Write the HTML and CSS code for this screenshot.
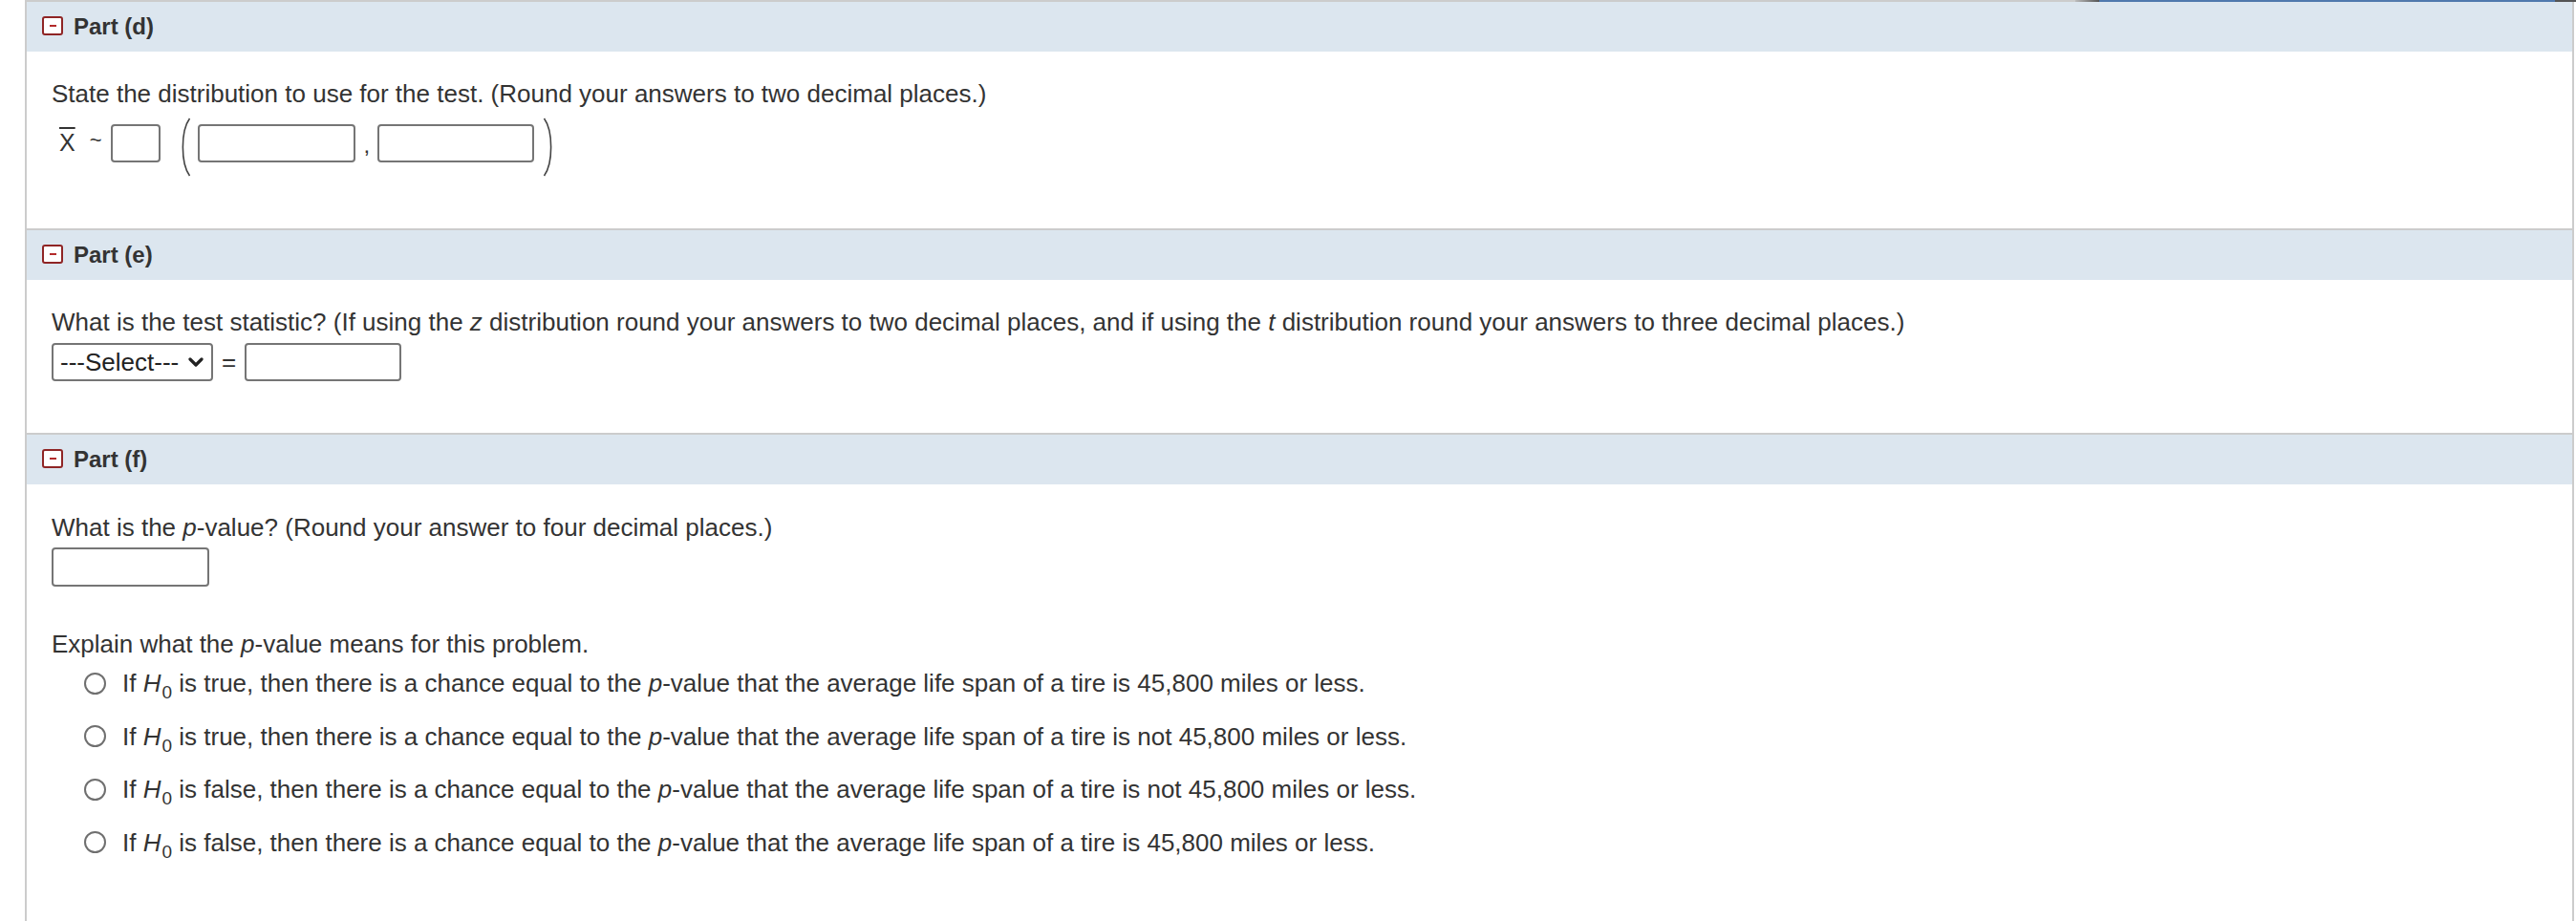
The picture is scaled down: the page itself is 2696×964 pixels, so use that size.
FILE: index.html
```html
<!DOCTYPE html>
<html lang="en">
<head>
<meta charset="utf-8">
<title>Parts d-f</title>
<link rel="stylesheet" href="styles.css">
</head>
<body>
<div class="topbar"><span class="tb-dark1"></span><span class="tb-blue"></span><span class="tb-dark2"></span></div>
<div class="panel">
  <section class="part">
    <div class="part-head"><span class="toggle"></span><span class="part-title">Part (d)</span></div>
    <div class="part-body">
      <p class="q">State the distribution to use for the test. (Round your answers to two decimal places.)</p>
      <div class="dist-row">
        <span class="xbar">X</span>
        <span class="tilde">~</span>
        <input class="box box-sm" type="text">
        <svg class="paren paren-l" width="14" height="62" viewBox="0 0 14 62"><path d="M12.5 1 C3 14 3 48 12.5 61" fill="none" stroke="#444" stroke-width="1.6"/></svg>
        <input class="box box-md" type="text">
        <span class="comma">,</span>
        <input class="box box-md2" type="text">
        <svg class="paren paren-r" width="14" height="62" viewBox="0 0 14 62"><path d="M1.5 1 C11 14 11 48 1.5 61" fill="none" stroke="#444" stroke-width="1.6"/></svg>
      </div>
    </div>
  </section>
  <section class="part">
    <div class="part-head"><span class="toggle"></span><span class="part-title">Part (e)</span></div>
    <div class="part-body">
      <p class="q">What is the test statistic? (If using the <i>z</i> distribution round your answers to two decimal places, and if using the <i>t</i> distribution round your answers to three decimal places.)</p>
      <div class="stat-row">
        <span class="select-wrap">
          <select class="select"><option>---Select---</option></select>
          <svg class="chev" width="16" height="10" viewBox="0 0 16 10"><path d="M2 2 L8 8 L14 2" fill="none" stroke="#222" stroke-width="3.2" stroke-linecap="round" stroke-linejoin="round"/></svg>
        </span>
        <span class="eq">=</span>
        <input class="box box-stat" type="text">
      </div>
    </div>
  </section>
  <section class="part">
    <div class="part-head"><span class="toggle"></span><span class="part-title">Part (f)</span></div>
    <div class="part-body body-f">
      <p class="q">What is the <i>p</i>-value? (Round your answer to four decimal places.)</p>
      <input class="box box-p" type="text">
      <p class="q explain">Explain what the <i>p</i>-value means for this problem.</p>
      <div class="options">
        <label class="opt"><span class="radio"></span><span class="opt-text">If <i>H</i><sub>0</sub> is true, then there is a chance equal to the <i>p</i>-value that the average life span of a tire is 45,800 miles or less.</span></label>
        <label class="opt"><span class="radio"></span><span class="opt-text">If <i>H</i><sub>0</sub> is true, then there is a chance equal to the <i>p</i>-value that the average life span of a tire is not 45,800 miles or less.</span></label>
        <label class="opt"><span class="radio"></span><span class="opt-text">If <i>H</i><sub>0</sub> is false, then there is a chance equal to the <i>p</i>-value that the average life span of a tire is not 45,800 miles or less.</span></label>
        <label class="opt"><span class="radio"></span><span class="opt-text">If <i>H</i><sub>0</sub> is false, then there is a chance equal to the <i>p</i>-value that the average life span of a tire is 45,800 miles or less.</span></label>
      </div>
    </div>
  </section>
</div>
</body>
</html>
```
FILE: styles.css
```css
html, body {
  margin: 0;
  padding: 0;
  background: #ffffff;
}
body {
  font-family: "Liberation Sans", Arial, sans-serif;
  font-size: 26px;
  color: #333333;
  overflow: hidden;
}
.topbar {
  position: absolute;
  top: 0;
  left: 2172px;
  height: 2px;
  display: flex;
}
.tb-dark1 { width: 25px; background: linear-gradient(90deg, #bbbbbb, #555555); }
.tb-blue { width: 477px; background: #5079ad; }
.tb-dark2 { width: 22px; background: #555555; }

.panel {
  margin-left: 26px;
  width: 2668px;
  box-sizing: border-box;
  border-left: 2px solid #cccccc;
  border-right: 2px solid #cccccc;
  min-height: 964px;
}
.part {
  border-top: 2px solid #cccccc;
}
.part-head {
  height: 52px;
  background: #dce6ef;
  display: flex;
  align-items: center;
  padding-left: 16px;
}
.toggle {
  width: 22px;
  height: 20px;
  box-sizing: border-box;
  border: 2px solid #8f2525;
  border-radius: 3px;
  background: #ffffff;
  display: flex;
  align-items: center;
  justify-content: center;
  margin-top: -2px;
}
.toggle::before {
  content: "";
  width: 7px;
  height: 2px;
  background: #b32a2a;
}
.part-title {
  margin-left: 11px;
  font-weight: bold;
  font-size: 24px;
  line-height: 28px;
  color: #333333;
}
.part-body {
  padding: 30px 26px 54px;
}
.q {
  margin: 0;
  line-height: 28px;
}

/* Part d */
.dist-row {
  display: flex;
  align-items: flex-start;
  height: 62px;
  margin-top: 11px;
}
.xbar {
  margin-left: 8px;
  margin-top: 12px;
  line-height: 28px;
  font-size: 25px;
  text-decoration: overline;
  text-decoration-thickness: 2px;
}
.tilde {
  margin-left: 15px;
  margin-top: 10px;
  line-height: 28px;
  font-size: 22px;
}
.box {
  box-sizing: border-box;
  height: 40px;
  border: 2px solid #757575;
  border-radius: 4px;
  background: #ffffff;
  margin: 0;
  padding: 0 6px;
  font: inherit;
  outline: none;
}
.box-sm { width: 52px; margin-left: 9px; margin-top: 7px; }
.paren { display: block; flex: none; }
.paren-l { margin-left: 18px; }
.box-md { width: 165px; margin-left: 7px; margin-top: 7px; }
.comma { margin-left: 9px; margin-top: 15px; line-height: 28px; font-size: 24px; }
.box-md2 { width: 164px; margin-left: 8px; margin-top: 7px; }
.paren-r { margin-left: 9px; }

/* Part e */
.stat-row {
  display: flex;
  align-items: center;
  margin-top: 8px;
}
.select-wrap {
  position: relative;
  display: block;
}
.select {
  display: block;
  box-sizing: border-box;
  width: 169px;
  height: 40px;
  border: 2px solid #757575;
  border-radius: 4px;
  background: #ffffff;
  font-family: "Liberation Sans", Arial, sans-serif;
  font-size: 26px;
  color: #222222;
  padding: 0 0 0 7px;
  -webkit-appearance: none;
  appearance: none;
  outline: none;
}
.chev {
  position: absolute;
  right: 10px;
  top: 15px;
  pointer-events: none;
}
.eq {
  margin-left: 9px;
  line-height: 28px;
}
.box-stat { width: 164px; margin-left: 9px; }

/* Part f */
.body-f { padding-top: 31px; }
.box-p {
  display: block;
  width: 165px;
  height: 41px;
  margin-top: 7px;
}
.explain { margin-top: 46px; }
.options {
  display: flex;
  flex-direction: column;
  gap: 27.5px;
  margin-top: 13px;
}
.opt {
  display: flex;
  align-items: center;
  padding-left: 34px;
  line-height: 28px;
}
.radio {
  width: 23px;
  height: 23px;
  box-sizing: border-box;
  border: 2px solid #6f6f6f;
  border-radius: 50%;
  background: #ffffff;
  flex: none;
}
.opt-text {
  margin-left: 17px;
}
.opt-text sub {
  font-size: 19px;
  line-height: 0;
  vertical-align: -7px;
  margin-left: 1px;
}
```
